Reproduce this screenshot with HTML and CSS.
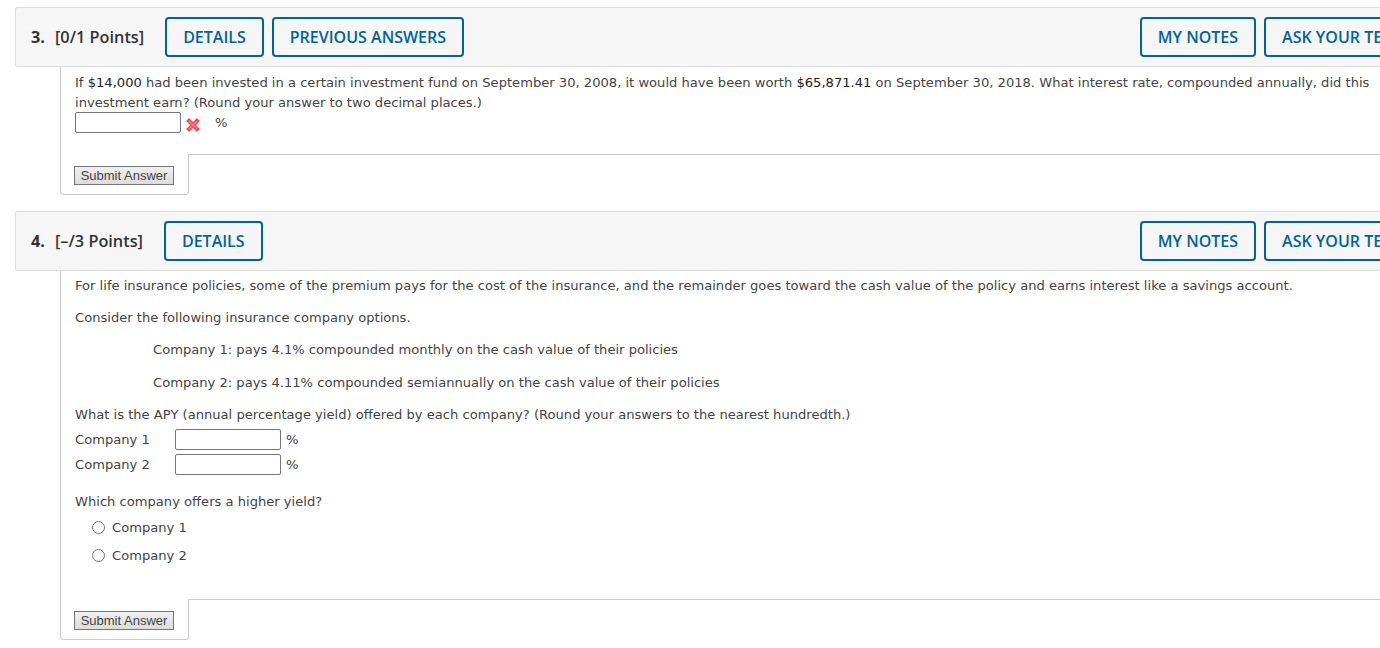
FILE: index.html
```html
<!DOCTYPE html>
<html lang="en">
<head>
  <meta charset="UTF-8">
  <title>Assignment</title>
  <link rel="stylesheet" href="styles.css">
</head>
<body>
  <div class="page">
    <section class="question q3">
      <header class="q-header">
        <span class="q-number">3.</span>
        <span class="q-points">[0/1 Points]</span>
        <button class="q-btn">DETAILS</button>
        <button class="q-btn">PREVIOUS ANSWERS</button>
        <div class="q-tools">
          <button class="q-btn">MY NOTES</button>
          <button class="q-btn">ASK YOUR TEACHER</button>
        </div>
      </header>
      <div class="q-body">
        <div class="q-content">
          <p class="prompt-first">If <span class="num">$14,000</span> had been invested in a certain investment fund on September 30, 2008, it would have been worth <span class="num">$65,871.41</span> on September 30, 2018. What interest rate, compounded annually, did this investment earn? (Round your answer to two decimal places.)</p>
          <div class="answer-row">
            <input class="answer" type="text">
            <svg class="wrong-icon" width="16" height="16" viewBox="0 0 16 16">
              <path d="M2.6 2.6 13.4 13.4M13.4 2.6 2.6 13.4" stroke="#ee4c58" stroke-width="4.2" fill="none"/>
              <path d="M4 4 12 12M12 4 4 12" stroke="#f77f88" stroke-width="1.2" fill="none"/>
            </svg>
            <span class="unit-wide">%</span>
          </div>
        </div>
        <div class="q-footer">
          <div class="submit-tab"><button class="submit-btn">Submit Answer</button></div>
          <div class="footer-rest"></div>
        </div>
      </div>
    </section>

    <section class="question q4">
      <header class="q-header">
        <span class="q-number">4.</span>
        <span class="q-points">[–/3 Points]</span>
        <button class="q-btn">DETAILS</button>
        <div class="q-tools">
          <button class="q-btn">MY NOTES</button>
          <button class="q-btn">ASK YOUR TEACHER</button>
        </div>
      </header>
      <div class="q-body">
        <div class="q-content">
          <p>For life insurance policies, some of the premium pays for the cost of the insurance, and the remainder goes toward the cash value of the policy and earns interest like a savings account.</p>
          <p>Consider the following insurance company options.</p>
          <p class="indent">Company 1: pays 4.1% compounded monthly on the cash value of their policies</p>
          <p class="indent gap-13">Company 2: pays 4.11% compounded semiannually on the cash value of their policies</p>
          <p>What is the APY (annual percentage yield) offered by each company? (Round your answers to the nearest hundredth.)</p>
          <div class="company-rows">
            <label class="company-row"><span class="company-name">Company 1</span><input class="answer" type="text"><span>%</span></label>
            <label class="company-row"><span class="company-name">Company 2</span><input class="answer" type="text"><span>%</span></label>
          </div>
          <p class="which">Which company offers a higher yield?</p>
          <div class="choices">
            <label class="choice"><input type="radio" name="company"><span>Company 1</span></label>
            <label class="choice"><input type="radio" name="company"><span>Company 2</span></label>
          </div>
        </div>
        <div class="q-footer">
          <div class="submit-tab"><button class="submit-btn">Submit Answer</button></div>
          <div class="footer-rest"></div>
        </div>
      </div>
    </section>
  </div>
</body>
</html>
```

FILE: styles.css
```css
html, body {
  margin: 0;
  height: 648px;
  overflow: hidden;
  background-color: #fff;
}

body {
  font-family: "DejaVu Sans", Verdana, sans-serif;
  font-size: 13.1px;
  line-height: 20px;
  color: #444;
}

.page {
  width: 1453px;
  padding: 7px 0 0 15px;
}

.question {
  margin-bottom: 16px;
}

.q-header {
  display: flex;
  align-items: center;
  height: 58px;
  padding: 0 15px;
  background-color: #f6f6f6;
  border: 1px solid #ddd;
  border-radius: 2px 0 0 2px;
  font-family: "Open Sans", sans-serif;
  font-weight: 600;
  font-size: 16.3px;
  color: #333;
}

.q-number {
  width: 24px;
  font-weight: 700;
}

.q-points {
  margin-right: 21px;
}

.q-btn {
  height: 40px;
  padding: 0 16px;
  margin-right: 8px;
  background-color: transparent;
  border: 2px solid #00639c;
  border-radius: 4px;
  font-family: "Open Sans", sans-serif;
  font-weight: 600;
  font-size: 16px;
  color: #00639c;
}

.q-tools {
  display: flex;
  margin-left: auto;
}

.q-tools .q-btn {
  margin-right: 0;
  margin-left: 8px;
}

.q-body {
  margin-left: 45px;
}

.q-content {
  padding: 5px 0 33px 14px;
  border-left: 1px solid #ccc;
}

.q3 .q-content {
  padding: 6px 0 21px 14px;
}

p {
  margin: 0 0 12px;
  width: 1305px;
}

.prompt-first {
  margin: 0 0 -1px;
}

.num {
  color: #222;
}

.answer-row {
  display: flex;
  align-items: center;
  height: 21px;
}

.answer {
  box-sizing: border-box;
  width: 106px;
  height: 21px;
  margin: 0;
  padding: 1px 2px;
  background-color: #fff;
  border: 1px solid #767676;
  border-radius: 2px;
}

.wrong-icon {
  margin: 4px 0 0 4px;
}

.unit-wide {
  margin-left: 14px;
}

.indent {
  padding-left: 78px;
}

.gap-13 {
  margin-top: 13px;
}

.company-rows {
  display: flex;
  flex-direction: column;
  gap: 4px;
  margin-top: -8px;
}

.company-row {
  display: flex;
  align-items: center;
  gap: 5px;
  height: 21px;
}

.company-name {
  width: 95px;
}

.which {
  margin: 17px 0 6px;
}

.choices {
  display: flex;
  flex-direction: column;
  gap: 8px;
  padding-left: 17px;
}

.choice {
  display: flex;
  align-items: center;
  gap: 7px;
  height: 20px;
}

.choice input {
  margin: 0 0 2px;
  width: 13px;
  height: 13px;
}

.q-footer {
  display: flex;
}

.submit-tab {
  box-sizing: border-box;
  width: 129px;
  height: 41px;
  padding: 12px 0 0 13px;
  border-left: 1px solid #ccc;
  border-right: 1px solid #ccc;
  border-bottom: 1px solid #ccc;
  border-radius: 0 0 4px 4px;
}

.footer-rest {
  flex: 1;
  border-top: 1px solid #ccc;
}

.submit-btn {
  display: block;
  box-sizing: border-box;
  width: 100px;
  height: 19px;
  padding: 0;
  background: linear-gradient(#f0f0f0, #dcdcdc);
  border: 1px solid #767676;
  font-family: "Liberation Sans", Arial, sans-serif;
  font-size: 13px;
  line-height: 17px;
  color: #444;
}
```
